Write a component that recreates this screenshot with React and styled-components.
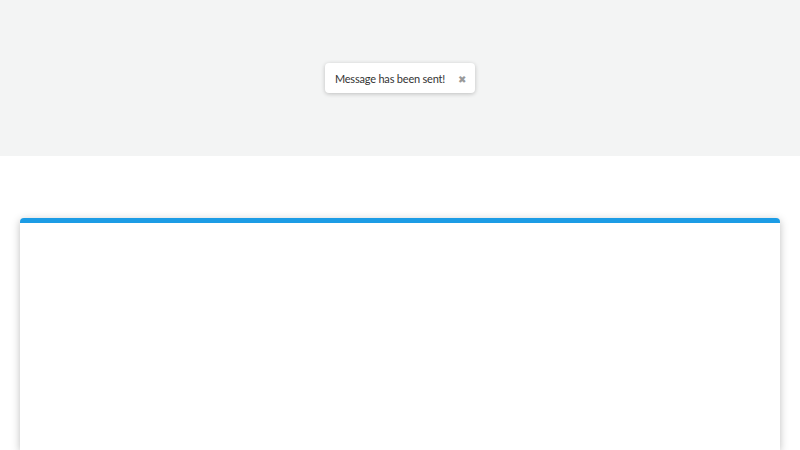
import styled, { createGlobalStyle } from "styled-components";

const Global = createGlobalStyle`
  html, body {
    margin: 0;
    padding: 0;
    background: #ffffff;
    font-family: Lato, "Open Sans", sans-serif;
    overflow: hidden;
  }
`;

const Banner = styled.div`
  height: 156px;
  background: #f3f4f4;
  display: flex;
  justify-content: center;
  align-items: flex-start;
  padding-top: 63px;
  box-sizing: border-box;
`;

const Toast = styled.div`
  display: flex;
  align-items: center;
  gap: 13px;
  height: 30px;
  box-sizing: border-box;
  padding: 0 9px 0 10px;
  background: #ffffff;
  border-radius: 4px;
  box-shadow: 0 1px 4px rgba(0, 0, 0, 0.22);
  font-size: 11px;
  letter-spacing: -0.2px;
  color: #333;
`;

const Close = styled.button`
  border: none;
  background: none;
  padding: 0;
  margin-top: 3px;
  font-size: 10px;
  color: #9a9a9a;
  cursor: pointer;
  line-height: 1;
`;

const Section = styled.div`
  padding: 62px 20px 0;
`;

const Card = styled.div`
  height: 227px;
  background: #fff;
  border-top: 5px solid #1c9ce5;
  border-radius: 4px 4px 0 0;
  box-shadow: 0 2px 9px rgba(0, 0, 0, 0.26);
`;

const App = () => {
  return (
    <>
      <Global />
      <Banner>
        <Toast>
          <span>Message has been sent!</span>
          <Close>✖</Close>
        </Toast>
      </Banner>
      <Section>
        <Card />
      </Section>
    </>
  );
};

export default App;
